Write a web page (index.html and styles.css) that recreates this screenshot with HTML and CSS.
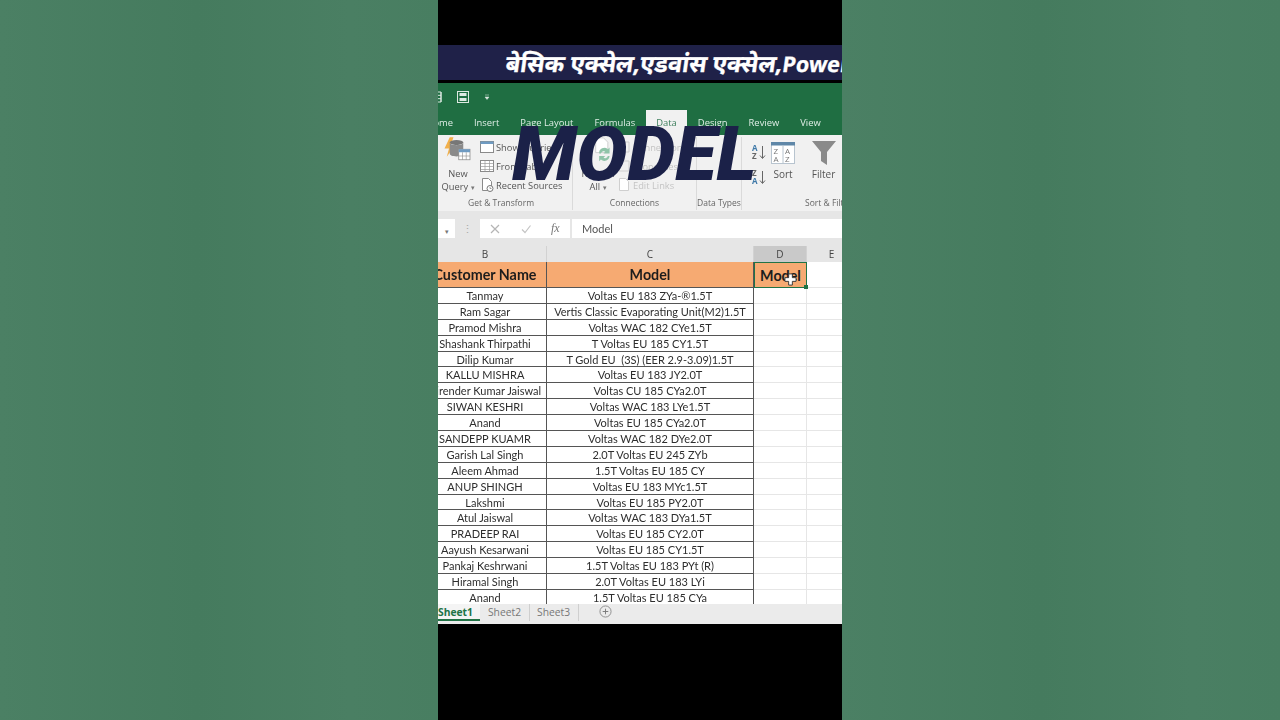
FILE: index.html
```html
<!DOCTYPE html>
<html lang="en">
<head>
<meta charset="utf-8">
<title>Excel Model</title>
<link rel="stylesheet" href="styles.css">
</head>
<body>
<aside class="side"></aside>
<main class="video">
  <div class="banner"><span class="banner-text">बेसिक एक्सेल,एडवांस एक्सेल,<span class="banner-latin">Power BI</span></span></div>
  <section class="excel">
    <div class="titlebar">
      <div class="qat">
        <svg class="qat-icon cut" viewBox="0 0 12 12"><path d="M0 1h9v10H0M9 1v10M0 4.3h9M0 7.7h9" fill="none" stroke="#fff" stroke-width="1"/></svg>
        <svg class="qat-icon" viewBox="0 0 12 12"><rect x=".5" y=".5" width="11" height="11" fill="none" stroke="#fff"/><rect x="2.500" y="2" width="7" height="3" fill="#fff"/><rect x="2.500" y="7" width="7" height="3" fill="#fff"/></svg>
        <svg class="qat-drop" viewBox="0 0 6 6"><path d="M1 1h4M1 3h4L3 5.500z" fill="#fff" stroke="#fff" stroke-width=".5"/></svg>
      </div>
      <nav class="tabs">
        <span class="tab">Home</span><span class="tab">Insert</span><span class="tab">Page Layout</span><span class="tab">Formulas</span><span class="tab active">Data</span><span class="tab">Design</span><span class="tab">Review</span><span class="tab">View</span>
      </nav>
    </div>
    <div class="ribbon">
      <div class="group g-get">
        <div class="group-body">
          <div class="big big-query">
            <svg class="i-query" viewBox="0 0 40 34">
              <path d="M9 0 2 15h6l-3 11 11-15h-6l4-11z" fill="#f2b04a"/>
              <ellipse cx="18" cy="7" rx="9" ry="3.500" fill="#777"/>
              <path d="M9 7v15c0 2 4 3.500 9 3.500s9-1.500 9-3.500V7c0 2-4 3.500-9 3.500S9 9 9 7z" fill="#8a8a8a"/>
              <rect x="21" y="16" width="15" height="14" fill="#fff" stroke="#8a8a8a"/>
              <rect x="21" y="16" width="15" height="4" fill="#6f9bc2"/>
              <path d="M26 20v10M31 20v10M21 25h15" stroke="#8a8a8a" stroke-width=".8"/>
            </svg>
            <span>New</span>
            <span>Query <i class="drop">▾</i></span>
          </div>
          <ul class="cmds">
            <li><svg class="i-s" viewBox="0 0 14 14"><rect x=".5" y="1.500" width="13" height="11" fill="#fff" stroke="#8a8a8a"/><rect x=".5" y="1.500" width="13" height="2.500" fill="#6f9bc2"/></svg>Show Queries</li>
            <li><svg class="i-s" viewBox="0 0 14 14"><rect x=".5" y="1.500" width="13" height="11" fill="#fff" stroke="#8a8a8a"/><path d="M.5 4.500h13M.5 7.500h13M.5 10.500h13M5 1.500v11M9.500 1.500v11" stroke="#9a9a9a" stroke-width=".7"/></svg>From Table</li>
            <li><svg class="i-s" viewBox="0 0 14 14"><path d="M2.500.5h6l3 3v9h-9z" fill="#fff" stroke="#8a8a8a"/><circle cx="10" cy="10.500" r="3" fill="#fff" stroke="#777"/><path d="M10 9v1.500h1.500" fill="none" stroke="#777" stroke-width=".7"/></svg>Recent Sources</li>
          </ul>
        </div>
        <div class="group-label">Get &amp; Transform</div>
      </div>
      <div class="group g-conn">
        <div class="group-body">
          <div class="big big-refresh">
            <svg class="i-refresh" viewBox="0 0 26 30">
              <path d="M4 1h9l5 5v12H4z" fill="#fff" stroke="#c8c8c8"/>
              <path d="M8 19a6 6 0 0 1 10-5l2-2v7h-7l2-2a3.500 3.500 0 0 0-5 2zM20 22a6 6 0 0 1-10 4l-2 2v-6h7l-2 2a3.500 3.500 0 0 0 5-2z" fill="#8fc3a8"/>
            </svg>
            <span>Refresh</span>
            <span>All <i class="drop">▾</i></span>
          </div>
          <ul class="cmds faded">
            <li><svg class="i-s" viewBox="0 0 14 14"><path d="M2 2h10v10H2z" fill="none" stroke="#cfcfcf"/></svg>Connections</li>
            <li><svg class="i-s" viewBox="0 0 14 14"><path d="M2 2h10v10H2z" fill="none" stroke="#cfcfcf"/></svg>Properties</li>
            <li><svg class="i-s" viewBox="0 0 14 14"><path d="M2.500.5h6l3 3v9h-9z" fill="#fff" stroke="#cfcfcf"/></svg>Edit Links</li>
          </ul>
        </div>
        <div class="group-label">Connections</div>
      </div>
      <div class="group g-types">
        <div class="group-body"></div>
        <div class="group-label">Data Types</div>
      </div>
      <div class="group g-sort">
        <div class="group-body">
          <div class="az">
            <svg class="i-az" viewBox="0 0 14 18"><text class="az-t blue" x="0" y="8">A</text><text class="az-t" x="0" y="16">Z</text><path d="M10.500 3v12M8 12.500l2.500 3 2.500-3" fill="none" stroke="#666"/></svg>
            <svg class="i-az" viewBox="0 0 14 18"><text class="az-t" x="0" y="8">Z</text><text class="az-t blue" x="0" y="16">A</text><path d="M10.500 3v12M8 12.500l2.500 3 2.500-3" fill="none" stroke="#666"/></svg>
          </div>
          <div class="big big-sort">
            <svg class="i-sort" viewBox="0 0 24 22"><rect x=".5" y=".5" width="23" height="21" fill="#fff" stroke="#b8c4cf"/><rect width="24" height="3.500" fill="#5f87a8"/><path d="M12 3.500v18" stroke="#b8c4cf"/><text class="sort-t" x="2.500" y="12">Z</text><text class="sort-t" x="14" y="12">A</text><text class="sort-t blue" x="2.500" y="20">A</text><text class="sort-t" x="14" y="20">Z</text></svg>
            <span class="sort-label">Sort</span>
          </div>
          <div class="big big-filter">
            <svg class="i-filter" viewBox="0 0 24 24"><path d="M0 0h24L15 11v13l-6-4v-9z" fill="#8a8a8a"/></svg>
            <span class="sort-label">Filter</span>
          </div>
        </div>
        <div class="group-label">Sort &amp; Filter</div>
      </div>
    </div>
    <div class="formula">
      <div class="namebox"><i class="drop">▾</i></div>
      <div class="dots">⋮</div>
      <div class="fx-box">
        <svg class="fx-i" viewBox="0 0 10 10"><path d="M1 1l8 8M9 1l-8 8" stroke="#b5b5b5" stroke-width="1.200"/></svg>
        <svg class="fx-i" viewBox="0 0 10 10"><path d="M1 5.500l3 3 5.500-7" fill="none" stroke="#c4c4c4" stroke-width="1.200"/></svg>
        <span class="fx">fx</span>
      </div>
      <div class="input">Model</div>
    </div>
    <div class="sheet">
      <div class="ch">B</div><div class="ch">C</div><div class="ch ch-on">D</div><div class="ch">E</div>
      <div class="hd b-r">Customer Name</div><div class="hd b-r">Model</div><div class="hd sel">Model<svg class="plus" viewBox="0 0 14 14"><path d="M5 1h4v4h4v4H9v4H5V9H1V5h4z" fill="#fff" stroke="#333"/></svg><i class="handle"></i></div><div class="e"></div>
      <div class="c">Tanmay</div><div class="c">Voltas EU 183 ZYa-®1.5T</div><div class="e"></div><div class="e"></div>
      <div class="c">Ram Sagar</div><div class="c">Vertis Classic Evaporating Unit(M2)1.5T</div><div class="e"></div><div class="e"></div>
      <div class="c">Pramod Mishra</div><div class="c">Voltas WAC 182 CYe1.5T</div><div class="e"></div><div class="e"></div>
      <div class="c">Shashank Thirpathi</div><div class="c">T Voltas EU 185 CY1.5T</div><div class="e"></div><div class="e"></div>
      <div class="c">Dilip Kumar</div><div class="c">T Gold EU&nbsp; (3S) (EER 2.9-3.09)1.5T</div><div class="e"></div><div class="e"></div>
      <div class="c">KALLU MISHRA</div><div class="c">Voltas EU 183 JY2.0T</div><div class="e"></div><div class="e"></div>
      <div class="c">Virender Kumar Jaiswal</div><div class="c">Voltas CU 185 CYa2.0T</div><div class="e"></div><div class="e"></div>
      <div class="c">SIWAN KESHRI</div><div class="c">Voltas WAC 183 LYe1.5T</div><div class="e"></div><div class="e"></div>
      <div class="c">Anand</div><div class="c">Voltas EU 185 CYa2.0T</div><div class="e"></div><div class="e"></div>
      <div class="c">SANDEPP KUAMR</div><div class="c">Voltas WAC 182 DYe2.0T</div><div class="e"></div><div class="e"></div>
      <div class="c">Garish Lal Singh</div><div class="c">2.0T Voltas EU 245 ZYb</div><div class="e"></div><div class="e"></div>
      <div class="c">Aleem Ahmad</div><div class="c">1.5T Voltas EU 185 CY</div><div class="e"></div><div class="e"></div>
      <div class="c">ANUP SHINGH</div><div class="c">Voltas EU 183 MYc1.5T</div><div class="e"></div><div class="e"></div>
      <div class="c">Lakshmi</div><div class="c">Voltas EU 185 PY2.0T</div><div class="e"></div><div class="e"></div>
      <div class="c">Atul Jaiswal</div><div class="c">Voltas WAC 183 DYa1.5T</div><div class="e"></div><div class="e"></div>
      <div class="c">PRADEEP RAI</div><div class="c">Voltas EU 185 CY2.0T</div><div class="e"></div><div class="e"></div>
      <div class="c">Aayush Kesarwani</div><div class="c">Voltas EU 185 CY1.5T</div><div class="e"></div><div class="e"></div>
      <div class="c">Pankaj Keshrwani</div><div class="c">1.5T Voltas EU 183 PYt (R)</div><div class="e"></div><div class="e"></div>
      <div class="c">Hiramal Singh</div><div class="c">2.0T Voltas EU 183 LYi</div><div class="e"></div><div class="e"></div>
      <div class="c">Anand</div><div class="c">1.5T Voltas EU 185 CYa</div><div class="e"></div><div class="e"></div>
    </div>
    <div class="sheet-tabs">
      <span class="st st-on">Sheet1</span><span class="st">Sheet2</span><span class="st">Sheet3</span>
      <svg class="st-add" viewBox="0 0 14 14"><circle cx="7" cy="7" r="6" fill="none" stroke="#8a8a8a"/><path d="M7 4v6M4 7h6" stroke="#777"/></svg>
    </div>
  </section>
  <div class="overlay">MODEL</div>
</main>
<aside class="side"></aside>
</body>
</html>
```

FILE: styles.css
```css
* { box-sizing: border-box; }
html, body { margin: 0; height: 720px; overflow: hidden; }
body { display: flex; background: #487f62; font-family: "Open Sans", "Liberation Sans", sans-serif; }
.side { flex: 1; background: linear-gradient(90deg, #4b8064 0%, #457b5e 45%, #4a7f63 80%, #487e61 100%); }
.video { position: relative; width: 404px; height: 720px; background: #000; padding-top: 45px; overflow: hidden; }

.banner { height: 35px; background: #1f2148; display: flex; align-items: center; padding-left: 68px; white-space: nowrap; overflow: hidden; }
.banner-text { display: inline-block; transform: skewX(-8deg); color: #fff; font-size: 23.600px; font-weight: 700; -webkit-text-stroke: .3px #fff; font-family: "Noto Sans", "Noto Sans Devanagari", "Lohit Devanagari", "DejaVu Sans", sans-serif; }
.banner-latin { font-size: 21.500px; }

.excel { margin-top: 3px; height: 541px; display: flex; flex-direction: column; filter: blur(.35px); }
.titlebar { height: 52px; background: #1f6e42; display: flex; flex-direction: column; }
.qat { height: 27px; display: flex; align-items: center; gap: 13px; }
.qat-icon { width: 12px; height: 12px; opacity: .85; }
.qat-icon.cut { margin-left: -6px; }
.qat-drop { width: 6px; height: 6px; margin-left: 2px; opacity: .85; }
.tabs { display: flex; margin-left: -22px; height: 25px; }
.tab { padding: 5px 10.500px 0; font-size: 9.400px; line-height: 16px; color: #dfeee6; white-space: nowrap; }
.tab.active { background: #f1f1f1; color: #3d7f5c; }

.ribbon { height: 76px; flex: none; background: #f1f1f1; display: flex; color: #555; font-size: 9.300px; overflow: hidden; }
.group { flex: none; display: flex; flex-direction: column; border-right: 1px solid #dadada; margin: 2px 0 1px; }
.group-body { flex: 1; display: flex; min-height: 0; }
.group-label { flex: none; height: 14px; line-height: 14px; font-size: 8.500px; text-align: center; color: #666; white-space: nowrap; }
.g-get { width: 135px; }
.g-get .group-label { padding-right: 8px; }
.g-conn { width: 124px; }
.g-types { width: 45px; }
.g-sort { width: 100px; border-right: 0; }
.g-sort .group-label { text-align: left; padding-left: 63px; }
.big { display: flex; flex-direction: column; align-items: center; line-height: 13px; white-space: nowrap; }
.big svg { flex: none; }
.big-query { width: 40px; margin-right: 2px; }
.i-query { width: 30px; height: 26px; margin-bottom: 4px; }
.drop { font-style: normal; font-size: 7px; color: #777; }
.cmds { list-style: none; margin: 0; padding: 3px 0 0; display: flex; flex-direction: column; gap: 5px; }
.cmds li { display: flex; align-items: center; gap: 2px; height: 14px; white-space: nowrap; }
.i-s { width: 14px; height: 14px; flex: none; }
.big-refresh { width: 44px; margin-left: 3px; }
.i-refresh { width: 23px; height: 26px; margin: 0 0 4px 10px; }
.faded { color: #c4c4c4; margin-left: -3px; }
.az { width: 29px; flex: none; padding: 6px 0 0 10px; display: flex; flex-direction: column; gap: 7px; }
.i-az { width: 14px; height: 18px; flex: none; }
.az-t { font-size: 8px; font-weight: 700; fill: #666; font-family: "Open Sans", sans-serif; }
.blue { fill: #3f79a8; }
.big-sort { width: 26px; }
.i-sort { width: 24px; height: 22px; margin: 5px 0 3px; }
.sort-t { font-size: 8px; fill: #777; font-family: "Open Sans", sans-serif; }
.sort-label { font-size: 10px; line-height: 14px; color: #555; }
.big-filter { width: 40px; margin-left: 10px; }
.i-filter { width: 24px; height: 24px; margin: 4px 0 2px; }

.formula { height: 35px; flex: none; background: #e6e6e6; display: flex; align-items: flex-start; padding-top: 8px; }
.namebox { width: 17px; height: 19px; background: #fff; line-height: 18px; padding-left: 7px; }
.dots { width: 25px; text-align: center; line-height: 19px; font-size: 11px; color: #aaa; }
.fx-box { width: 90px; height: 19px; background: #fff; display: flex; align-items: center; gap: 21px; padding-left: 10px; }
.fx-i { width: 10px; height: 10px; }
.fx { font-family: "Liberation Serif", serif; font-style: italic; font-size: 12px; color: #777; margin-left: -1px; }
.input { flex: 1; margin-left: 2px; height: 19px; background: #fff; font-size: 11px; line-height: 19px; padding-left: 10px; color: #555; font-family: Lato, sans-serif; }

.sheet { flex: 1; min-height: 0; display: grid; grid-template-columns: 123px 207px 53px 50px; grid-template-rows: 16px 26px repeat(20, 15.9px); margin-left: -14px; background: #fff; overflow: hidden; font-family: Lato, "Liberation Sans", sans-serif; }
.ch { background: #e6e6e6; text-align: center; font-size: 10px; line-height: 16px; color: #444; border-right: 1px solid #d2d2d2; font-family: "Open Sans", sans-serif; }
.ch-on { background: #c9c9c9; }
.hd { background: #f6aa72; border-bottom: 1px solid #555; display: flex; align-items: center; justify-content: center; font-size: 14.300px; font-weight: 700; color: #1c1c1c; white-space: nowrap; }
.b-r { border-right: 1px solid #555; }
.sel { position: relative; border: 1.500px solid #217346; }
.plus { position: absolute; left: 29px; top: 10px; width: 13px; height: 13px; }
.handle { position: absolute; right: -2px; bottom: -2px; width: 4px; height: 4px; background: #217346; }
.c { border-right: 1px solid #555; border-bottom: 1px solid #555; text-align: center; font-size: 11px; line-height: 15px; color: #2e2e2e; white-space: nowrap; }
.e { border-right: 1px solid #e6e6e6; border-bottom: 1px solid #e6e6e6; }

.sheet-tabs { height: 20px; flex: none; background: #ebebeb; display: flex; align-items: flex-start; font-size: 10.300px; color: #777; }
.st { padding: 0 8px 0 7px; height: 17px; line-height: 16px; border-right: 1px solid #cfcfcf; }
.st-on { padding: 0 7px 0 0; margin-right: 1px; font-weight: 700; color: #217346; background: #f4f4f4; border-right: 0; border-bottom: 2px solid #217346; }
.st-add { width: 13px; height: 13px; margin: 1px 0 0 20px; }

.overlay { position: absolute; left: 74px; top: 109px; font-family: Roboto, "Liberation Sans", sans-serif; font-weight: 900; font-style: italic; font-size: 76px; line-height: 90px; color: #1b2148; white-space: nowrap; }
```
